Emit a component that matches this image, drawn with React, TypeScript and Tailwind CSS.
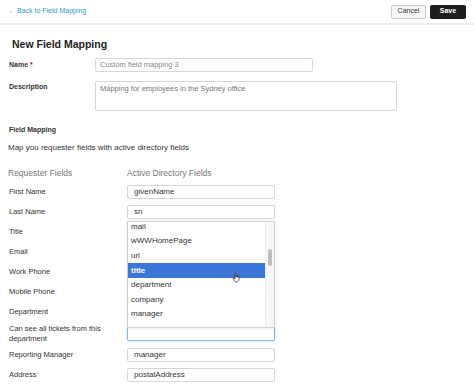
import React from "react";

const rows: { label: string; value?: string; hidden?: boolean }[] = [
  { label: "First Name", value: "givenName" },
  { label: "Last Name", value: "sn" },
  { label: "Title", hidden: true },
  { label: "Email", hidden: true },
  { label: "Work Phone", hidden: true },
  { label: "Mobile Phone", hidden: true },
  { label: "Department", hidden: true },
];

const items = ["mail", "wWWHomePage", "url", "title", "department", "company", "manager"];

function Hand() {
  return (
    <svg width="10" height="11" viewBox="0 0 10 11" className="absolute left-[104px] top-[50px]">
      <path
        d="M3 1.2c0-.6.9-.6.9 0V5l.2-1.1c.1-.6.9-.5.9.1V5.2l.2-.9c.1-.6.9-.5.9.1v1l.2-.6c.2-.5.9-.3.8.2V7c0 1.6-1 3-2.6 3H4.2C3.3 10 2.6 9.4 2.2 8.6L1 6.3c-.3-.5.4-1 .8-.6L3 7V1.2z"
        fill="#fff"
        stroke="#222"
        strokeWidth="0.7"
        strokeLinejoin="round"
      />
    </svg>
  );
}

export default function App() {
  return (
    <div className="relative h-[387px] w-[474px] overflow-hidden bg-white font-['Liberation_Sans',Arial,sans-serif] text-[#333]">
      {/* header */}
      <div className="flex h-[25px] items-center justify-between border-b-2 border-[#ececec] pl-[8px] pr-[8px]">
        <div className="flex items-center gap-[2px] text-[7px] text-[#2b9ad0]">
          <span className="text-[#9ab]">←</span>
          <span>Back to Field Mapping</span>
        </div>
        <div className="flex items-center gap-[4px]">
          <div className="flex h-[14px] w-[35px] items-center justify-center rounded-[2px] border border-[#cfcfcf] bg-[#f6f6f6] text-[7px] text-[#333]">
            Cancel
          </div>
          <div className="flex h-[14px] w-[36px] items-center justify-center rounded-[2px] bg-[#1e1e1e] text-[7px] font-bold text-white">
            Save
          </div>
        </div>
      </div>

      {/* title */}
      <div className="mt-[12px] pl-[12px] text-[10.5px] font-bold leading-[14px] text-[#222]">New Field Mapping</div>

      {/* name */}
      <div className="mt-[7px] flex items-center">
        <div className="w-[95px] pl-[9px] text-[7px] font-bold">
          Name<span className="text-[#d0021b]"> *</span>
        </div>
        <div className="flex h-[14px] w-[218px] items-center rounded-[2px] border border-[#d6d6d6] pl-[4px] text-[7.5px] text-[#888]">
          Custom field mapping 3
        </div>
      </div>

      {/* description */}
      <div className="mt-[9px] flex items-start">
        <div className="w-[95px] pl-[9px] pt-[1px] text-[7px] font-bold leading-[9px]">Description</div>
        <div className="h-[30px] w-[302px] rounded-[2px] border border-[#d6d6d6] pl-[4px] pt-[2px] text-[7.5px] leading-[9px] text-[#777]">
          Mapping for employees in the Sydney office
        </div>
      </div>

      <div className="mt-[14px] pl-[9px] text-[7px] font-bold leading-[10px]">Field Mapping</div>
      <div className="mt-[8px] pl-[8px] text-[8px] leading-[10px]">Map you requester fields with active directory fields</div>

      {/* column headers */}
      <div className="mt-[11px] flex h-[18px] items-center text-[8.5px] font-light text-[#777]">
        <div className="w-[127px] pl-[8px]">Requester Fields</div>
        <div>Active Directory Fields</div>
      </div>

      {/* rows */}
      <div className="flex flex-col">
        {rows.map((r) => (
          <div key={r.label} className="flex h-5 items-center">
            <div className="w-[127px] pl-[9px] text-[7.5px]">{r.label}</div>
            {!r.hidden && (
              <div className="flex h-[14px] w-[148px] items-center rounded-[2px] border border-[#d6d6d6] pl-[6px] text-[8px] text-[#333]">
                {r.value}
              </div>
            )}
          </div>
        ))}

        <div className="flex h-[23px] items-center">
          <div className="w-[127px] pl-[9px] text-[7.5px] leading-[10px]">
            Can see all tickets from this
            <br />
            department
          </div>
          <div className="relative">
            <div className="h-[14px] w-[148px] rounded-[2px] border border-[#8eb2e3] shadow-[0_0_2px_rgba(80,140,220,0.5)]" />
            {/* dropdown list */}
            <div className="absolute bottom-[13px] left-0 h-[107px] w-[148px] overflow-hidden border border-[#d0d0d0] bg-white shadow-[0_0_3px_rgba(0,0,0,0.12)]">
              <div className="flex h-full">
                <div className="-mt-[2px] flex-1">
                  {items.map((it) => (
                    <div
                      key={it}
                      className={
                        "flex h-[14.6px] items-center pl-[3px] text-[8px] " +
                        (it === "title" ? "bg-[#3b76d8] font-bold text-white" : "text-[#333]")
                      }
                    >
                      {it}
                    </div>
                  ))}
                </div>
                <div className="relative w-[9px] border-l border-[#ececec] bg-[#f7f7f7]">
                  <div className="absolute left-[2px] top-[27px] h-[17px] w-[4px] rounded-[2px] bg-[#bdbdbd]" />
                </div>
              </div>
              <Hand />
            </div>
          </div>
        </div>

        <div className="flex h-5 items-center">
          <div className="w-[127px] pl-[9px] text-[7.5px]">Reporting Manager</div>
          <div className="flex h-[14px] w-[148px] items-center rounded-[2px] border border-[#d6d6d6] pl-[6px] text-[8px]">
            manager
          </div>
        </div>
        <div className="flex h-5 items-center">
          <div className="w-[127px] pl-[9px] text-[7.5px]">Address</div>
          <div className="flex h-[14px] w-[148px] items-center rounded-[2px] border border-[#d6d6d6] pl-[6px] text-[8px]">
            postalAddress
          </div>
        </div>
      </div>
    </div>
  );
}
